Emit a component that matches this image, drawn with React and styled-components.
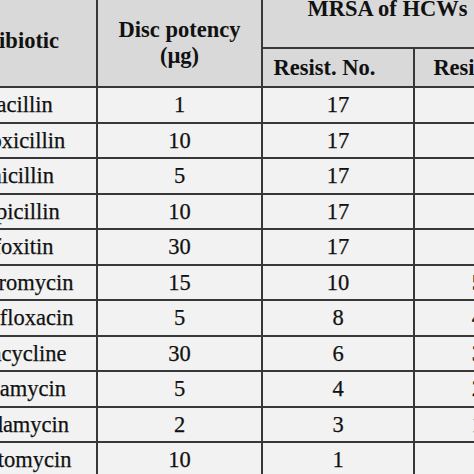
import React from "react";
import styled, { createGlobalStyle } from "styled-components";

const GlobalStyle = createGlobalStyle`
  html, body {
    margin: 0;
    padding: 0;
    background: #f2f2f2;
    overflow: hidden;
  }
`;

const Viewport = styled.div`
  width: 474px;
  height: 474px;
  overflow: hidden;
`;

const Table = styled.div`
  display: grid;
  grid-template-columns: 170px 163px 150px 153px;
  grid-template-rows: 50.7px 37.8px repeat(11, 33.5px);
  gap: 2px;
  width: max-content;
  margin: -4px 0 0 -74px;
  background: #383838;
  font-family: "Liberation Serif", "Times New Roman", serif;
  color: #111;
`;

const HeadCell = styled.div`
  grid-row: ${(p) => p.$row};
  grid-column: ${(p) => p.$col};
  display: flex;
  align-items: ${(p) => (p.$top ? "flex-start" : "center")};
  justify-content: center;
  text-align: center;
  background: #d9d9d9;
  font-weight: 700;
  font-size: 22.5px;
  line-height: 26px;
  padding: ${(p) => p.$pad || "0"};
  white-space: nowrap;
`;

const Cell = styled.div`
  display: flex;
  align-items: center;
  justify-content: center;
  background: #f2f2f2;
  font-size: 22.5px;
  line-height: 26px;
  white-space: nowrap;
  -webkit-text-stroke: 0.25px #111;
`;

const rows = [
  ["Oxacillin", "1", "17", "100"],
  ["Amoxicillin", "10", "17", "100"],
  ["Penicillin", "5", "17", "100"],
  ["Ampicillin", "10", "17", "100"],
  ["Cefoxitin", "30", "17", "100"],
  ["Erythromycin", "15", "10", "58.8"],
  ["Ciprofloxacin", "5", "8", "47.1"],
  ["Tetracycline", "30", "6", "35.3"],
  ["Gentamycin", "5", "4", "23.5"],
  ["Clindamycin", "2", "3", "17.6"],
  ["Streptomycin", "10", "1", "5.9"],
];

export default function App() {
  return (
    <Viewport>
      <GlobalStyle />
      <Table>
        <HeadCell $row="1 / 3" $col="1">Antibiotic</HeadCell>
        <HeadCell $row="1 / 3" $col="2" $pad="3px 0 0 0">
          Disc potency
          <br />
          (µg)
        </HeadCell>
        <HeadCell $row="1" $col="3 / 5" $top $pad="0 56px 0 0">
          MRSA of HCWs
        </HeadCell>
        <HeadCell $row="2" $col="3" $pad="0 27px 0 0">Resist. No.</HeadCell>
        <HeadCell $row="2" $col="4" $pad="0 25px 0 0">Resist. %</HeadCell>
        {rows.map((r) =>
          r.map((v, i) => <Cell key={r[0] + i}>{v}</Cell>)
        )}
      </Table>
    </Viewport>
  );
}
